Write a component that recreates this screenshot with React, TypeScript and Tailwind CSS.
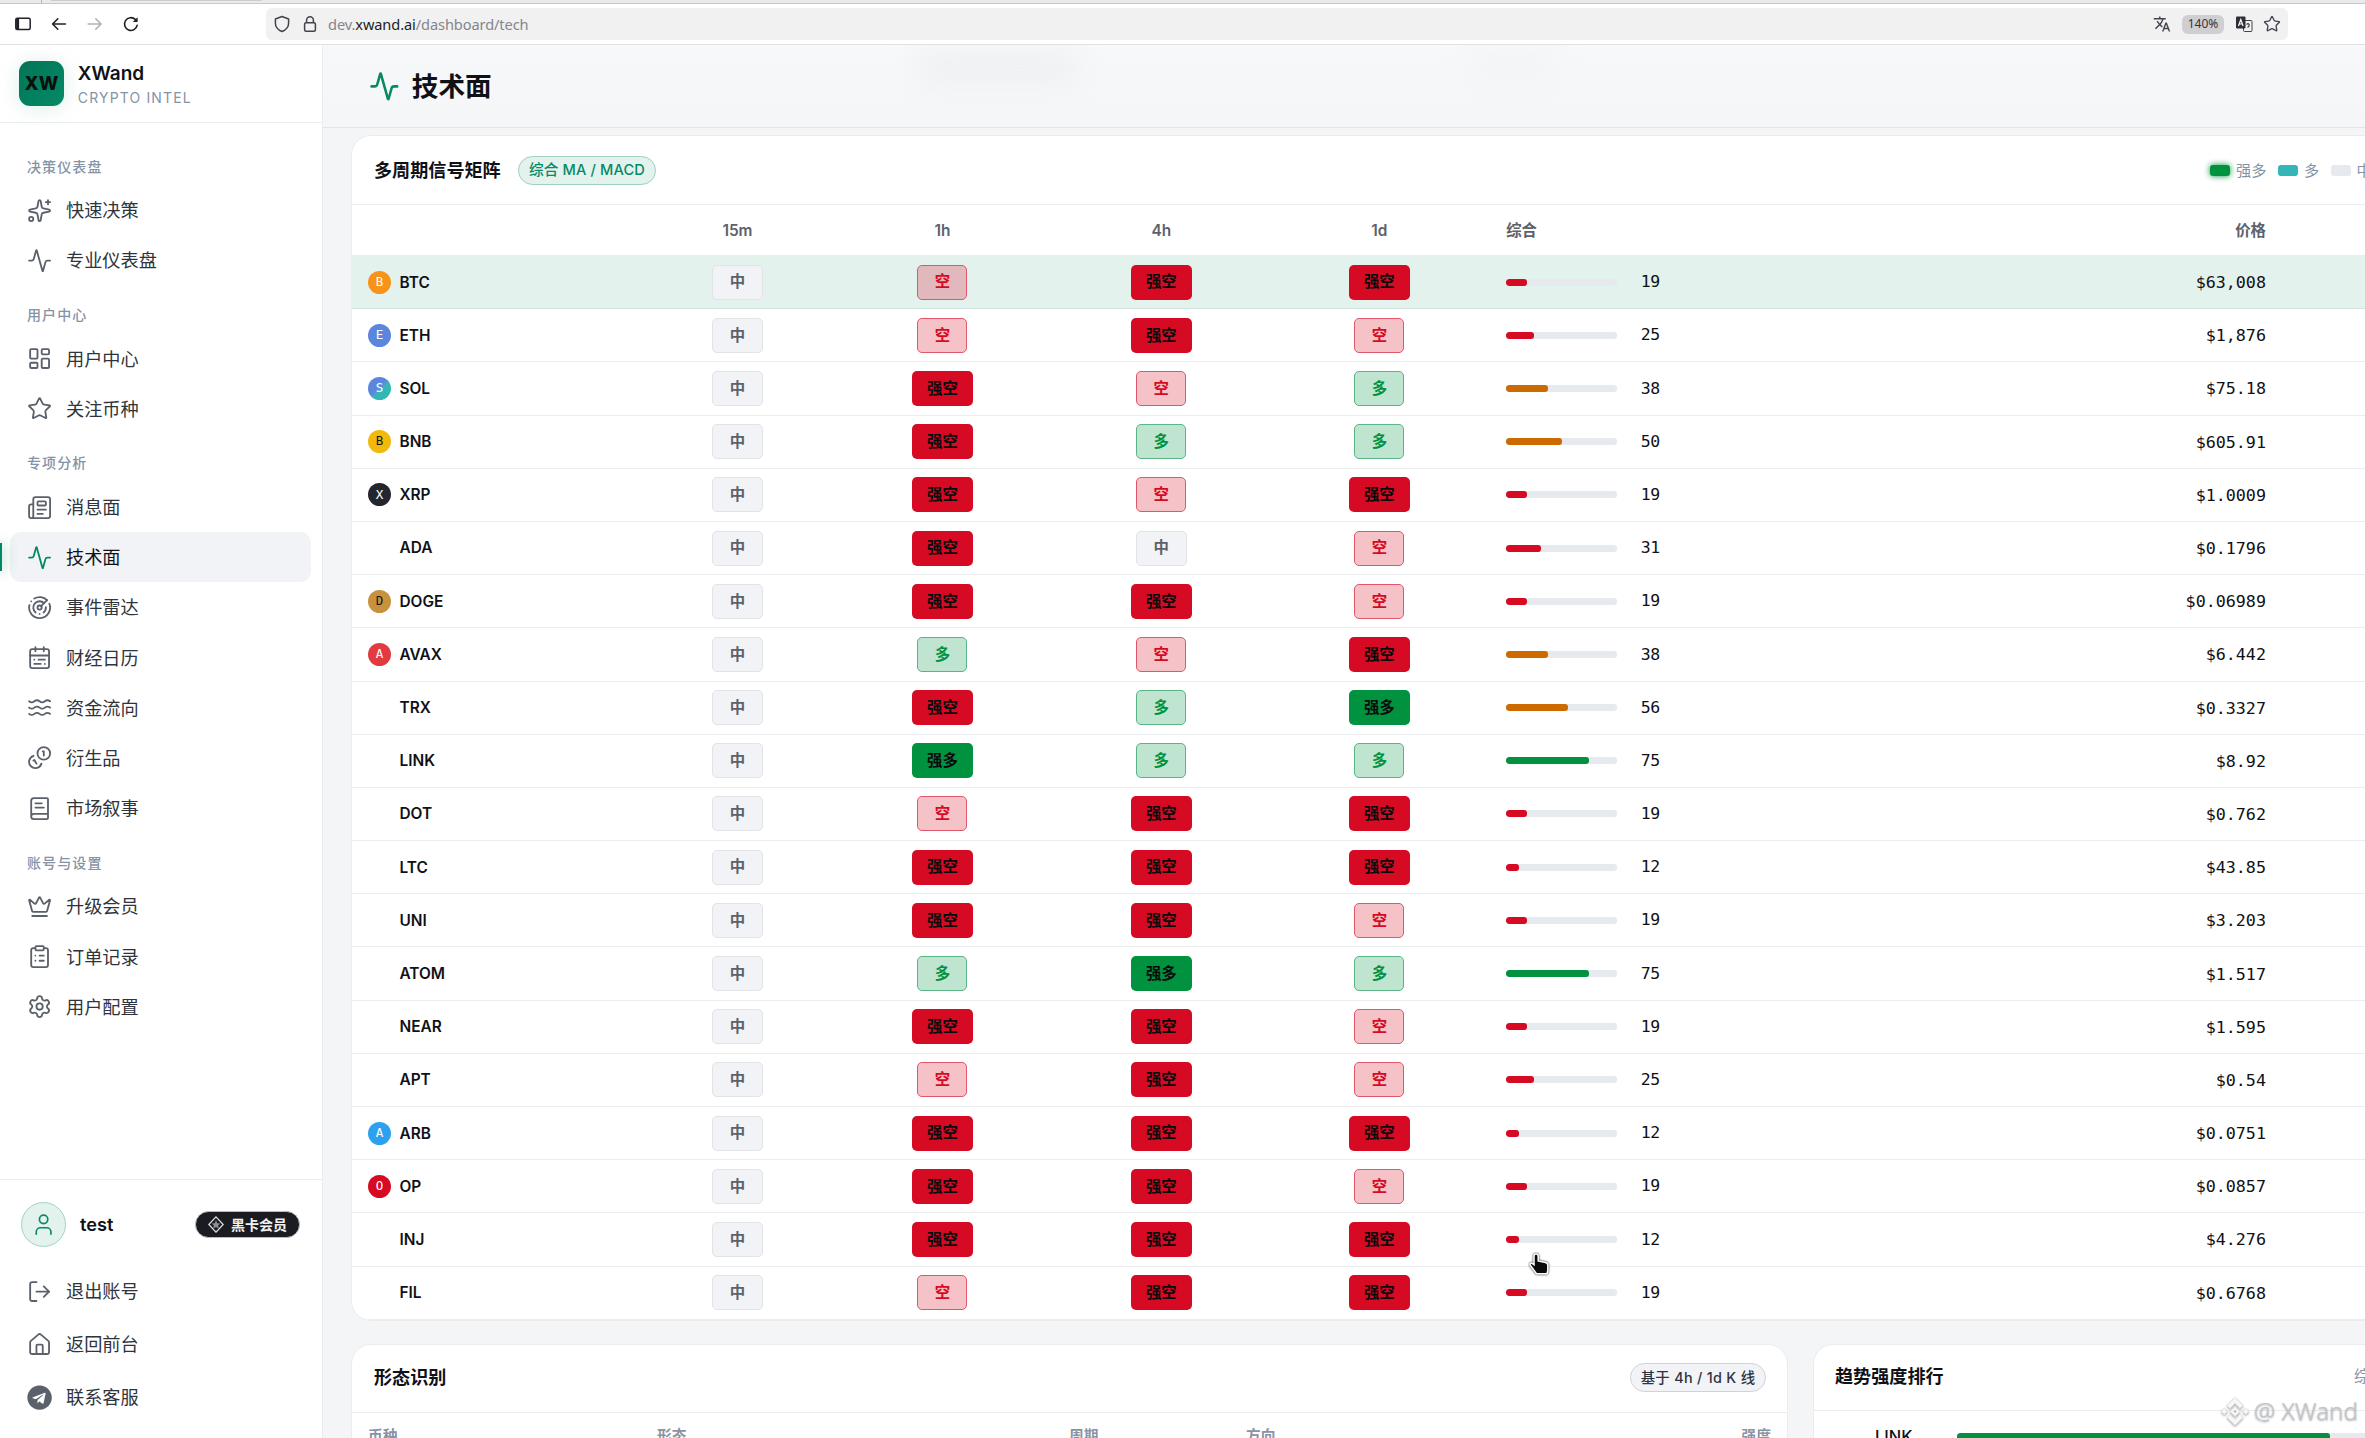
import React from "react";
import {
  Activity, BookText, CalendarRange, ClipboardList, Crown, House, LayoutDashboard,
  LogOut, Newspaper, Radar, Settings, Sparkles, Star, User, Waves,
} from "lucide-react";
import { FaTelegram } from "react-icons/fa";
import { MdTranslate } from "react-icons/md";

type IconType = React.ComponentType<any>;

function CoinPair({ size = 24, strokeWidth = 2, className }: { size?: number; strokeWidth?: number; className?: string }) {
  return (
    <svg className={className} width={size} height={size} viewBox="0 0 24 24" fill="none" stroke="currentColor" strokeWidth={strokeWidth} strokeLinecap="round" strokeLinejoin="round">
      <path d="M13.744 17.736a6 6 0 1 1-7.48-7.48" />
      <path d="M15 6h1v4" />
      <path d="m6.134 14.768.866-.5 2 3.464" />
      <circle cx="16" cy="8" r="6" />
    </svg>
  );
}

const groups: { label: string; items: { icon: IconType; text: string; active?: boolean }[] }[] = [
  { label: "决策仪表盘", items: [{ icon: Sparkles, text: "快速决策" }, { icon: Activity, text: "专业仪表盘" }] },
  { label: "用户中心", items: [{ icon: LayoutDashboard, text: "用户中心" }, { icon: Star, text: "关注币种" }] },
  {
    label: "专项分析",
    items: [
      { icon: Newspaper, text: "消息面" },
      { icon: Activity, text: "技术面", active: true },
      { icon: Radar, text: "事件雷达" },
      { icon: CalendarRange, text: "财经日历" },
      { icon: Waves, text: "资金流向" },
      { icon: CoinPair, text: "衍生品" },
      { icon: BookText, text: "市场叙事" },
    ],
  },
  {
    label: "账号与设置",
    items: [
      { icon: Crown, text: "升级会员" },
      { icon: ClipboardList, text: "订单记录" },
      { icon: Settings, text: "用户配置" },
    ],
  },
];

const coinColor: Record<string, string> = {
  BTC: "bg-[#f7931a] text-white",
  ETH: "bg-[#5b86dd] text-white",
  SOL: "bg-linear-to-br from-[#5b86dd] from-45% to-[#32b8b4] to-60% text-white",
  BNB: "bg-[#f0b90b] text-[#15161a]",
  XRP: "bg-[#23272d] text-white",
  DOGE: "bg-[#c8923c] text-[#15161a]",
  AVAX: "bg-[#e23b3f] text-white",
  ARB: "bg-[#2da1f0] text-white",
  OP: "bg-[#d60a23] text-white",
};

// Signals per row: n = neutral, s = short, S = strong short, l = long, L = strong long
const rows: [string, string, number, string][] = [
  ["BTC", "nsSS", 19, "$63,008"],
  ["ETH", "nsSs", 25, "$1,876"],
  ["SOL", "nSsl", 38, "$75.18"],
  ["BNB", "nSll", 50, "$605.91"],
  ["XRP", "nSsS", 19, "$1.0009"],
  ["ADA", "nSns", 31, "$0.1796"],
  ["DOGE", "nSSs", 19, "$0.06989"],
  ["AVAX", "nlsS", 38, "$6.442"],
  ["TRX", "nSlL", 56, "$0.3327"],
  ["LINK", "nLll", 75, "$8.92"],
  ["DOT", "nsSS", 19, "$0.762"],
  ["LTC", "nSSS", 12, "$43.85"],
  ["UNI", "nSSs", 19, "$3.203"],
  ["ATOM", "nlLl", 75, "$1.517"],
  ["NEAR", "nSSs", 19, "$1.595"],
  ["APT", "nsSs", 25, "$0.54"],
  ["ARB", "nSSS", 12, "$0.0751"],
  ["OP", "nSSs", 19, "$0.0857"],
  ["INJ", "nSSS", 12, "$4.276"],
  ["FIL", "nsSS", 19, "$0.6768"],
];

const signal: Record<string, [string, string]> = {
  n: ["中", "w-[51px] border border-[#e1e3e6] bg-[#f1f3f6] text-[#5c616b]"],
  s: ["空", "w-[50px] border border-[#e0566a] bg-[#d60a23]/25 text-[#d60a23]"],
  l: ["多", "w-[50px] border border-[#59b585] bg-[#00923f]/25 text-[#00923f]"],
  S: ["强空", "w-[61px] bg-[#d60a23] text-[#0b0b0d]"],
  L: ["强多", "w-[61px] bg-[#00923f] text-[#0b0b0d]"],
};

const sans = "font-[Inter,'Noto_Sans_CJK_SC',sans-serif]";
const mono = "font-['DejaVu_Sans_Mono',monospace]";
const tableGrid = "grid grid-cols-[286px_198.8px_211.2px_226.6px_209.6px_300px_481.8px] items-center";

function BrowserBar() {
  return (
    <div className="shrink-0 font-['Noto_Sans',sans-serif]">
      <div className="flex h-[4px] border-b border-[#c8c8ce] bg-[#eaeaed]">
        <div className="w-[42px] border-r border-[#b4b4ba]" />
        <div className="ml-[9px] h-px w-[211px] bg-[#c9cdd0]" />
      </div>
      <div className="flex h-[41px] items-center border-b border-[#e0e1e4] bg-white">
        <div className="flex w-[266px] items-center pl-[14px] text-[#202127]">
          <svg width="18" height="18" viewBox="0 0 18 18" fill="none" stroke="currentColor" strokeWidth="1.5">
            <rect x="1.8" y="3.2" width="14.4" height="11.4" rx="1.5" />
            <path d="M3.6 3.2v11.4" strokeWidth="3" />
          </svg>
          <svg className="ml-[18px]" width="18" height="18" viewBox="0 0 18 18" fill="none" stroke="currentColor" strokeWidth="1.6" strokeLinecap="round" strokeLinejoin="round">
            <path d="M15.4 9H2.6M7.8 3.8 2.6 9l5.2 5.2" />
          </svg>
          <svg className="ml-[18px] text-[#b0b1b5]" width="18" height="18" viewBox="0 0 18 18" fill="none" stroke="currentColor" strokeWidth="1.6" strokeLinecap="round" strokeLinejoin="round">
            <path d="M2.2 9H15M9.8 3.8 15 9l-5.2 5.2" />
          </svg>
          <svg className="ml-[18px]" width="18" height="18" viewBox="0 0 18 18" fill="none" stroke="currentColor" strokeWidth="1.6" strokeLinecap="round">
            <path d="M15.2 10.2A6.4 6.4 0 1 1 13.3 4.4l1 1" />
            <path d="M15.6 2.2v4.9h-4.9z" fill="currentColor" stroke="none" />
          </svg>
        </div>
        <div className="flex h-8 w-[2022px] items-center rounded-[6px] bg-[#f1f1f2] text-[#42434c]">
          <svg className="ml-[7px]" width="18" height="18" viewBox="0 0 18 18" fill="none" stroke="currentColor" strokeWidth="1.5" strokeLinejoin="round">
            <path d="M9 1.5 15.6 4v4.2c0 3.8-2.6 6.6-6.6 8.3-4-1.7-6.6-4.5-6.6-8.3V4z" />
          </svg>
          <svg className="ml-[10px]" width="18" height="18" viewBox="0 0 18 18" fill="none" stroke="currentColor" strokeWidth="1.5">
            <rect x="3.6" y="7.8" width="10.8" height="8.4" rx="1.5" />
            <path d="M5.6 7.8V5.2a3.4 3.4 0 0 1 6.8 0v2.6" />
          </svg>
          <div className="ml-[9px] flex-1 text-[14.6px] leading-none tracking-[-0.1px] text-[#85858c]">
            dev.<span className="text-[#1d1d24]">xwand.ai</span>/dashboard/tech
          </div>
          <MdTranslate size={18} />
          <div className="ml-[11px] flex h-[19px] w-[42px] items-center justify-center rounded-[6px] bg-[#cfcfd3] text-[12px] text-[#33343c]">140%</div>
          <svg className="ml-[12px]" width="17" height="17" viewBox="0 0 17 17" fill="none">
            <rect x="7.5" y="4.5" width="8.5" height="11" rx="1" stroke="#42434c" strokeWidth="1" />
            <rect x="0" y="0.5" width="9.5" height="12" rx="1" fill="#2d2e36" />
            <path d="M2.5 10 4.8 3.5 7.1 10M3.3 8h3" stroke="#fff" strokeWidth="1.2" />
            <path d="M10.5 8.5q1.8-1.8 2.5 0t-1.5 3" stroke="#42434c" strokeWidth="1.2" />
          </svg>
          <Star className="mr-[7px] ml-[10px]" size={18} strokeWidth={1.8} />
        </div>
      </div>
    </div>
  );
}

function NavItem({ icon: Icon, text, active, tall }: { icon: IconType; text: string; active?: boolean; tall?: boolean }) {
  return (
    <div className={"relative flex shrink-0 items-center " + (tall ? "h-[53.2px]" : "h-[50.2px]")}>
      {active && <div className="absolute top-[11px] left-0 h-[28px] w-[2px] bg-[#058763] shadow-[0_0_14px_#058763]" />}
      <div className={"mr-[11px] ml-[10px] flex h-[50px] flex-1 items-center gap-[14px] rounded-[11px] pl-[16.8px] " + (active ? "bg-[#f1f3f6]" : "")}>
        <Icon className={active ? "text-[#058a64]" : "text-[#5b616b]"} size={25.2} strokeWidth={1.75} />
        <span className={"text-[18.2px] leading-none " + (active ? "text-[#101116]" : "text-[#2f343c]")}>{text}</span>
      </div>
    </div>
  );
}

function Sidebar() {
  return (
    <aside className="flex w-[323px] shrink-0 flex-col border-r border-[#ebecee] bg-white">
      <div className="flex h-[78px] shrink-0 items-center border-b border-[#ebecee] pl-[19px]">
        <div className="flex size-[44.8px] items-center justify-center rounded-[11px] bg-linear-to-br from-[#027557] to-[#058a66] pt-px text-[18.5px] font-extrabold text-[#08110e] shadow-[0_2px_20px_rgba(5,135,99,0.14)]">XW</div>
        <div className="ml-[14px] flex flex-col gap-[8px] pt-[3px]">
          <span className="text-[19px] leading-[18px] font-semibold text-[#101116]">XWand</span>
          <span className="text-[14px] leading-[14px] tracking-[1.15px] text-[#8593a5]">CRYPTO INTEL</span>
        </div>
      </div>
      <div className="flex flex-1 flex-col pt-[14px]">
        {groups.map((g) => (
          <div key={g.label}>
            <div className="flex h-[48.1px] items-start pt-[19.5px] pl-[27px] text-[14px] leading-[20px] font-medium tracking-[1.12px] text-[#8593a5]">{g.label}</div>
            {g.items.map((it) => (
              <NavItem key={it.text} {...it} />
            ))}
          </div>
        ))}
      </div>
      <div className="flex h-[259px] shrink-0 flex-col border-t border-[#ebecee] pt-[22px]">
        <div className="mb-[17.5px] flex h-[45px] items-center pr-[22px] pl-[21px]">
          <div className="flex size-[45px] items-center justify-center rounded-full border border-[#a5d2c5] bg-[#e4f2ee]">
            <User className="text-[#058a64]" size={25.2} strokeWidth={1.6} />
          </div>
          <span className="ml-[14px] text-[18.2px] font-semibold text-[#101116]">test</span>
          <div className="ml-auto flex h-[27px] w-[105px] items-center justify-center gap-[7px] rounded-full border border-[#b9bbc0] bg-[#1b1c22] text-[14px] font-bold text-[#f1f2f4]">
            <svg width="16" height="17" viewBox="0 0 16 17" fill="none" stroke="#dfe1e5" strokeWidth="1.2">
              <path d="M8 .8 15.2 8.5 8 16.2.8 8.5z" />
              <path d="M8 4 9.3 7.2l3 .3-2.2 2.1.8 3.2L8 11l-2.9 1.8.8-3.2-2.2-2.1 3-.3z" fill="#8c8e94" stroke="none" />
            </svg>
            黑卡会员
          </div>
        </div>
        <NavItem icon={LogOut} text="退出账号" tall />
        <NavItem icon={House} text="返回前台" tall />
        <NavItem icon={FaTelegram} text="联系客服" tall />
      </div>
    </aside>
  );
}

function barColor(v: number) {
  if (v >= 70) return "bg-[#00923f]";
  if (v >= 35) return "bg-[#cc6a00]";
  return "bg-[#d60a23]";
}

function Legend({ swatch, text }: { swatch: string; text: string }) {
  return (
    <div className="flex items-center gap-[6px]">
      <span className={"h-[11px] w-[20px] rounded-[3px] " + swatch} />
      <span className="text-[15.2px] leading-none whitespace-nowrap">{text}</span>
    </div>
  );
}

function SignalMatrix() {
  return (
    <section className="w-[2060px] shrink-0 overflow-hidden rounded-[20px] border border-[#ebecee] bg-white">
      <div className="flex h-[69px] items-center border-b border-[#ebecee] pt-px pl-[22px]">
        <h2 className="w-[127px] text-[18.1px] font-bold whitespace-nowrap text-[#101116]">多周期信号矩阵</h2>
        <span className="ml-[17px] flex h-[29px] w-[138px] items-center justify-center rounded-full border border-[#9fd0c2] bg-[#e4f2ee] text-[14.6px] font-medium tracking-[0.15px] whitespace-nowrap text-[#058a64]">综合 MA / MACD</span>
        <div className="ml-[1554px] flex items-center gap-[11.5px] text-[#8593a5]">
          <Legend swatch="bg-[#00923f] shadow-[0_0_6px_#00923f]" text="强多" />
          <Legend swatch="bg-[#34b6b8]" text="多" />
          <Legend swatch="bg-[#e6e9ed]" text="中" />
        </div>
      </div>
      <div className={tableGrid + " h-[51px] border-b border-[#ebecee] pt-px text-[15.4px] font-semibold text-[#5c616b]"}>
        <span />
        <span className="text-center">15m</span>
        <span className="text-center">1h</span>
        <span className="text-center">4h</span>
        <span className="text-center">1d</span>
        <span className="pl-[22px]">综合</span>
        <span className="text-right">价格</span>
      </div>
      {rows.map(([sym, sig, score, price], i) => (
        <div key={sym} className={tableGrid + " h-[53.2px] border-b " + (i === 0 ? "border-[#d2e5df] bg-[#e4f2ee]" : "border-[#ebecee]")}>
          <div className="flex items-center pl-[16px]">
            <span className={"flex size-[23px] items-center justify-center rounded-full text-[12.5px] leading-none " + mono + " " + (coinColor[sym] ?? "")}>
              {coinColor[sym] ? sym[0] : ""}
            </span>
            <span className="ml-[8.5px] text-[15.4px] font-semibold text-[#101116]">{sym}</span>
          </div>
          {sig.split("").map((s, j) => (
            <div key={j} className="flex justify-center">
              <span className={"flex h-[35px] items-center justify-center rounded-[5px] text-[15.4px] leading-none font-bold " + signal[s][1]}>{signal[s][0]}</span>
            </div>
          ))}
          <div className="flex items-center pl-[22px]">
            <span className="h-[7px] w-[111px] overflow-hidden rounded-[3px] bg-[#e6e9ed]">
              <span className={"block h-full rounded-[3px] " + barColor(score)} style={{ width: `${score}%` }} />
            </span>
            <span className={"ml-[23.5px] pt-px text-[16.5px] tracking-[-0.3px] text-[#101116] " + mono}>{score}</span>
          </div>
          <span className={"pt-px text-right text-[16.7px] text-[#101116] " + mono}>{price}</span>
        </div>
      ))}
    </section>
  );
}

function PatternCard() {
  return (
    <section className="h-[300px] w-[1437px] shrink-0 rounded-[20px] border border-[#ebecee] bg-white">
      <div className="flex h-[68px] items-center justify-between border-b border-[#ebecee] pr-[21px] pb-px pl-[22px]">
        <h2 className="text-[18.1px] font-bold text-[#101116]">形态识别</h2>
        <span className="flex h-[29px] w-[136px] items-center justify-center rounded-full border border-[#cfd3d8] bg-[#f1f3f6] text-[14.4px] font-medium tracking-[0.3px] whitespace-nowrap text-[#2f343c]">基于 4h / 1d K 线</span>
      </div>
      <div className="grid grid-cols-[289px_412px_177px_1fr_auto] pt-[13px] pr-[16px] pl-[16px] text-[14.7px] leading-[21px] font-semibold text-[#8a93a3]">
        <span>币种</span>
        <span>形态</span>
        <span>周期</span>
        <span>方向</span>
        <span>强度</span>
      </div>
    </section>
  );
}

function TrendCard() {
  return (
    <section className="h-[300px] w-[700px] shrink-0 rounded-[20px] border border-[#ebecee] bg-white">
      <div className="flex h-[66px] items-center border-b border-[#ebecee] pb-px pl-[21px]">
        <h2 className="w-[519px] text-[18.1px] font-bold text-[#101116]">趋势强度排行</h2>
        <span className="text-[15.4px] whitespace-nowrap text-[#8593a5]">综合</span>
      </div>
      <div className="mt-[15px] flex h-[22px] items-center pl-[61px]">
        <span className="w-[82px] text-[16.4px] font-medium text-[#101116]">LINK</span>
        <span className="h-[7px] w-[497px] overflow-hidden rounded-[3px] bg-[#e6e9ed]">
          <span className="block h-full w-3/4 rounded-[3px] bg-[#00923f]" />
        </span>
      </div>
    </section>
  );
}

function Watermark() {
  return (
    <div className="absolute right-[7px] bottom-[12px] flex items-center gap-[5px] font-['Noto_Sans',sans-serif] text-[24.2px] leading-[30px] font-light text-[#c3c5c9] [text-shadow:0_1px_2px_rgba(0,0,0,0.35),0_0_2px_#fff]">
      <svg className="drop-shadow-[0_1px_1px_rgba(0,0,0,0.4)]" width="28" height="29" viewBox="0 0 28 29" fill="#f7f7f8" stroke="#d9dadd" strokeWidth=".5">
        <path d="M14 .5 22 8.5l-3 3-5-5-5 5-3-3zM14 28.500l8-8-3-3-5 5-5-5-3 3zM3.200 11.300l3 3.200-3 3.200-3-3.200zM24.800 11.300l3 3.200-3 3.200-3-3.200zM14 9.500l5 5-5 5-5-5zm0 3.600-1.400 1.400 1.400 1.400 1.400-1.400z" fillRule="evenodd" />
      </svg>
      <span className="whitespace-nowrap">@ XWand</span>
    </div>
  );
}

export default function App() {
  return (
    <div className={"relative flex h-[1438px] w-[2365px] flex-col overflow-hidden bg-[#f4f5f7] " + sans}>
      <BrowserBar />
      <div className="flex min-h-0 flex-1">
        <Sidebar />
        <main className="flex min-w-0 flex-1 flex-col overflow-hidden">
          <header className="relative flex h-[83px] shrink-0 items-center border-b border-[#e3e5e8] bg-linear-to-b from-[#f7f8fa] to-[#f5f6f8] pl-[46px]">
            <div className="absolute top-[6px] left-[595px] h-[34px] w-[160px] rounded-full bg-[#eeeff1]/80 blur-[13px]" />
            <div className="absolute top-[6px] left-[1150px] h-[26px] w-[80px] rounded-full bg-[#f1f2f4]/70 blur-[14px]" />
            <Activity className="text-[#058a64]" size={30.8} strokeWidth={2} />
            <h1 className="ml-[12px] text-[26.6px] leading-none font-bold text-[#101116]">技术面</h1>
          </header>
          <div className="flex flex-col gap-[23px] pt-[7px] pl-[28px]">
            <SignalMatrix />
            <div className="flex gap-[25px]">
              <PatternCard />
              <TrendCard />
            </div>
          </div>
        </main>
      </div>
      <svg className="absolute top-[1252px] left-[1528px]" width="24" height="25" viewBox="0 0 24 25">
        <path d="M8 2c1.3 0 2.2.9 2.2 2.2V9l7.3 1.5c1.5.3 2.3 1.2 2.3 2.6v5.3l-.8 3.3H8.5L2.3 13.3c-.8-1.3.5-2.6 1.9-1.9L6 12.8V4.2C6 2.9 6.7 2 8 2z" fill="#0b0b0d" stroke="#fff" strokeWidth="1.5" className="drop-shadow-[0_0_1px_rgba(0,0,0,0.9)]" />
      </svg>
      <Watermark />
    </div>
  );
}
